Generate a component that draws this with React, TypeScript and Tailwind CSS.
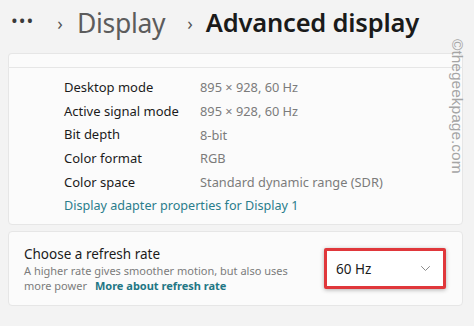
import React from "react"

const rows: [string, string][] = [
  ["Desktop mode", "895 × 928, 60 Hz"],
  ["Active signal mode", "895 × 928, 60 Hz"],
  ["Bit depth", "8-bit"],
  ["Color format", "RGB"],
  ["Color space", "Standard dynamic range (SDR)"],
]

function Chevron() {
  return (
    <svg width="9" height="5" viewBox="0 0 9 5" fill="none">
      <path d="M0.5 0.5l4 4 4-4" stroke="#8a8a8a" strokeWidth="1" strokeLinecap="round" strokeLinejoin="round" />
    </svg>
  )
}

export default function App() {
  return (
    <div
      className="relative w-[474px] h-[326px] overflow-hidden bg-[#f3f3f3] text-[#1b1b1b]"
      style={{ fontFamily: '"Noto Sans", "Open Sans", sans-serif' }}
    >
      {/* breadcrumb */}
      <div className="flex items-center h-[53px] pl-[11px] pb-[7px]">
        <span className="text-[18px] tracking-[1px] text-[#3a3a3a] leading-none -mt-[6px]">•••</span>
        <span className="ml-[23px] text-[18px] text-[#555] leading-none">›</span>
        <span className="ml-[14px] text-[26.5px] text-[#5c5c5c] leading-none tracking-[-0.3px]">Display</span>
        <span className="ml-[22px] text-[18px] text-[#555] leading-none">›</span>
        <span className="ml-[13px] text-[25.5px] font-semibold text-[#1a1a1a] leading-none tracking-[-0.2px]">
          Advanced display
        </span>
      </div>

      <div className="flex flex-col pl-[8px] pr-[11px]">
        {/* card scrolled under the header */}
        <div className="h-[14px] bg-[#fbfbfb] border border-b-0 border-[#e6e6e6] rounded-t-[4px]" />

        {/* display information */}
        <div className="bg-[#fbfbfb] border border-[#e6e6e6] rounded-b-[4px] pl-[55px] pt-[8px] pb-[6px]">
          {rows.map(([k, v]) => (
            <div key={k} className="flex h-[23.7px] items-center text-[13px]">
              <span className="w-[136px] text-[#1b1b1b]">{k}</span>
              <span className="text-[#7b7b7b] text-[12.8px]">{v}</span>
            </div>
          ))}
          <div className="h-[24px] flex items-center text-[12.6px] text-[#2a7d8c]">
            Display adapter properties for Display 1
          </div>
        </div>

        {/* refresh rate */}
        <div className="mt-[6px] h-[75px] bg-[#fbfbfb] border border-[#e6e6e6] rounded-[4px] flex items-center pl-[15px] pr-[16px]">
          <div className="flex-1 flex flex-col pt-[1px]">
            <span className="text-[13.5px] leading-[18px] text-[#1b1b1b]">Choose a refresh rate</span>
            <span className="text-[11px] leading-[15px] text-[#7b7b7b] whitespace-nowrap">
              A higher rate gives smoother motion, but also uses
            </span>
            <span className="text-[11px] leading-[15px] text-[#7b7b7b] whitespace-nowrap">
              more power
              <span className="ml-[8px] font-bold text-[#1f7785]">More about refresh rate</span>
            </span>
          </div>
          <div className="w-[122px] h-[41px] border-[3px] border-[#e0373b] rounded-[2px] shadow-[0_1px_4px_rgba(0,0,0,0.3)] bg-white flex items-center justify-between pl-[9px] pr-[13px]">
            <span className="text-[13.5px] text-[#1b1b1b]">60 Hz</span>
            <Chevron />
          </div>
        </div>
      </div>

      {/* watermark */}
      <div
        className="absolute left-[465px] top-[39px] origin-top-left rotate-90 text-[15.5px] text-[#a5a5a5] whitespace-nowrap leading-none"
        style={{ fontFamily: '"Liberation Sans", sans-serif' }}
      >
        ©thegeekpage.com
      </div>
    </div>
  )
}
